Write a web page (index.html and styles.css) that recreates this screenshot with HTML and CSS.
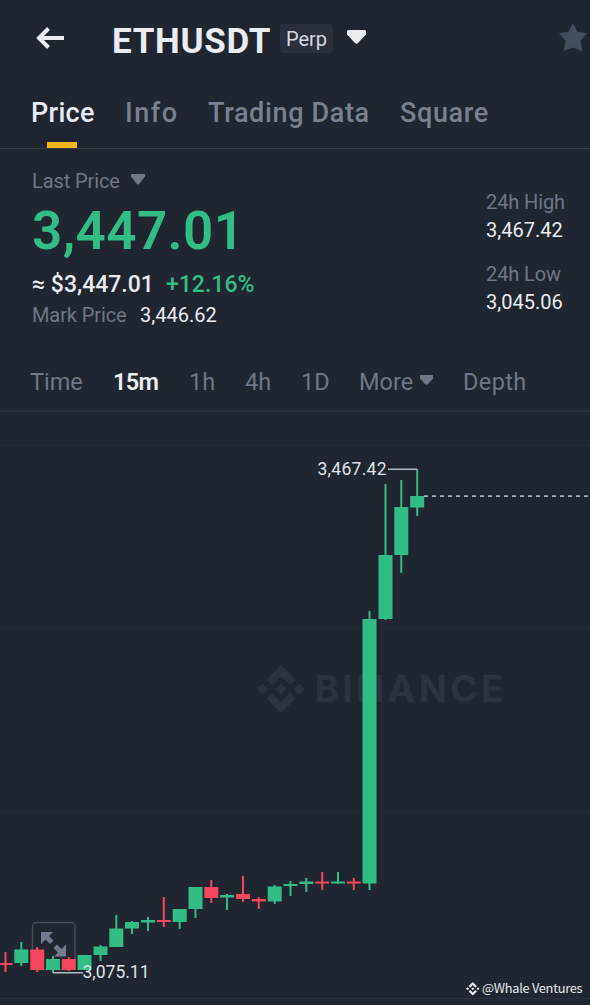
FILE: index.html
```html
<!DOCTYPE html>
<html lang="en">
<head>
  <meta charset="UTF-8">
  <meta name="viewport" content="width=device-width, initial-scale=1.0">
  <title>ETHUSDT Perp</title>
  <link rel="stylesheet" href="styles.css">
</head>
<body>

  <!-- Header -->
  <header class="header">
    <svg class="back" viewBox="0 0 28 22">
      <path d="M28 11H3M12.500 1.500L3 11l9.500 9.500"></path>
    </svg>
    <h1>ETHUSDT</h1>
    <span class="badge">Perp</span>
    <svg class="caret-big" viewBox="0 0 19 14">
      <path d="M1 0h17l1 1v3.500L11 13q-1.500 1.500-3 0L0 4.500V1z"></path>
    </svg>
    <svg class="star" viewBox="0 0 30 30">
      <path d="M15 1l4.300 8.800 9.700 1.400-6.300 7.200 1.500 10.600L15 25.500l-9.200 3.500 1.500-10.600L1 11.200l9.700-1.400z"></path>
    </svg>
  </header>

  <!-- Tabs -->
  <nav class="tabs">
    <a class="tab active">Price</a>
    <a class="tab info">Info</a>
    <a class="tab">Trading Data</a>
    <a class="tab">Square</a>
  </nav>

  <!-- Price summary -->
  <section class="stats">
    <div class="summary">
      <div class="label last">Last Price
        <svg class="caret" viewBox="0 0 14 11"><path d="M0 0h14v2.500L8 10q-1 1-2 0L0 2.500z"></path></svg>
      </div>
      <div class="price">3,447.01</div>
      <div class="fiat"><span class="usd">≈ $3,447.01</span><span class="change">+12.16%</span></div>
      <div class="mark"><span class="label">Mark Price</span><span class="value">3,446.62</span></div>
    </div>
    <div class="range">
      <div class="label">24h High</div>
      <div class="value">3,467.42</div>
      <div class="label low">24h Low</div>
      <div class="value">3,045.06</div>
    </div>
  </section>

  <!-- Intervals -->
  <nav class="intervals">
    <a>Time</a>
    <a class="active">15m</a>
    <a>1h</a>
    <a>4h</a>
    <a>1D</a>
    <a class="more">More
      <svg class="caret-small" viewBox="0 0 13 10"><path d="M0 0h13v3.500L8 9q-1.500 1.500-3 0L0 3.500z"></path></svg>
    </a>
    <a class="depth">Depth</a>
  </nav>

  <!-- Candlestick chart -->
  <main class="chart">
    <svg viewBox="0 412 590 593">
      <defs>
        <symbol id="logo" viewBox="0 0 48 48">
          <path d="M24 0L38.500 14.500l-5.500 5.500-9-9-9 9-5.500-5.500zM24 48L9.500 33.500l5.500-5.500 9 9 9-9 5.500 5.500zM24 18.500l5.500 5.500-5.500 5.500-5.500-5.500zM5.500 18.500L11 24l-5.500 5.500L0 24zM42.500 18.500L48 24l-5.500 5.500L37 24z"></path>
        </symbol>
      </defs>

      <path class="grid" d="M0 445.500H590M0 628.500H590M0 812.500H590"></path>
      <path class="axis" d="M0 998.500H590"></path>

      <use class="watermark" href="#logo" x="257" y="665" width="48" height="48"></use>
      <text class="watermark name" x="314.500" y="702" textLength="189">BINANCE</text>

      <rect class="expand" x="32.500" y="922.500" width="42.500" height="47" rx="4"></rect>

      <path class="wick up" d="M21.300 942V966M53 956V973M84.500 955V970M100.500 945V961M116.300 915V947M132 921V934M148 917V931M179.700 909V929M195.500 887V918M227 894V910M274.700 885V904M290.500 881V896M306.300 878V892M338 872V884M369.500 611V890M385.500 484V620M401.300 480V573M417.200 469V516"></path>
      <path class="wick down" d="M5.500 952V972M37.200 947V972M68.800 957V971M163.800 897V927M211.300 880V903M243 876V902M258.800 897V909M322.200 872V890M353.800 878V890"></path>
      <path class="body up" d="M21.300 949.500V963M53 959V970M84.500 955V970M100.500 946.500V955M116.300 928.500V947M132 922V928.500M148 920V922.500M179.700 909V922M195.500 887V909M227 895V897.500M274.700 886.500V901.500M290.500 884V886M306.300 881.500V884M338 881.500V883.500M369.500 619V883.500M385.500 555V619M401.300 507V555M417.200 496V507.500"></path>
      <path class="body down" d="M5.500 963V965M37.200 949.500V970M68.800 959V970M163.800 920V922M211.300 887V898M243 894V899M258.800 899V901.500M322.200 881.500V883.500M353.800 881.500V883.500"></path>

      <g class="arrows">
        <path d="M41 932h12l-4 4 4.500 4.500-3.500 3.500-4.500-4.500-4.500 4.500z"></path>
        <path d="M66 956.500H54l4-4-4.500-4.500 3.500-3.500 4.500 4.500 4.500-4.500z"></path>
      </g>

      <path class="lead" d="M388 469.200H417M53 972.700H83"></path>
      <path class="last-line" d="M424 496.200H590"></path>
      <text class="note" x="317.500" y="475" textLength="69">3,467.42</text>
      <text class="note" x="82.500" y="978" textLength="67">3,075.11</text>

      <use class="credit" href="#logo" x="466" y="982" width="13.500" height="13.500"></use>
      <text class="credit" x="482" y="993" textLength="100.500">@Whale Ventures</text>
    </svg>
  </main>

</body>
</html>
```

FILE: styles.css
```css
* {
  box-sizing: border-box;
}

body {
  margin: 0;
  width: 590px;
  height: 1005px;
  overflow: hidden;
  background: #1f262f;
  color: #eaecf2;
  font-family: Roboto, "Liberation Sans", sans-serif;
}

svg {
  display: block;
  fill: currentColor;
}

/* Header */
.header {
  display: flex;
  align-items: center;
  height: 78px;
  padding: 0 2px 2px 36px;
}

.back {
  width: 28px;
  height: 22px;
  fill: none;
  stroke: currentColor;
  stroke-width: 4;
}

h1 {
  width: 168px;
  margin: 6px 0 0 48px;
  font-size: 35px;
  font-weight: 700;
  letter-spacing: 0.7px;
}

.badge {
  width: 53px;
  height: 29px;
  border-radius: 4px;
  background: #29303c;
  color: #d5d9e1;
  font-size: 20px;
  line-height: 31px;
  text-align: center;
}

.caret-big {
  width: 19px;
  height: 14px;
  margin: 0 0 2px 14px;
}

.star {
  width: 30px;
  height: 30px;
  margin: 0 0 2px auto;
  color: #454e5d;
}

/* Tabs */
.tabs {
  display: grid;
  grid-template-columns: 94px 83px 192px auto;
  height: 71px;
  padding-left: 31px;
  border-bottom: 1px solid #333a45;
  color: #7a8090;
  font-size: 27px;
  font-weight: 500;
  line-height: 70px;
  letter-spacing: 0.65px;
  white-space: nowrap;
}

.tab.active {
  color: #eaecf2;
  background: linear-gradient(#edb91c, #edb91c) 16px 64px / 30px 6px no-repeat;
  letter-spacing: 0.3px;
}

.tab.info {
  letter-spacing: 1.5px;
}

/* Price summary */
.stats {
  display: flex;
  justify-content: space-between;
  height: 203px;
  padding: 20px 24px 0 32px;
}

.label {
  color: #707686;
  font-size: 20px;
  letter-spacing: -0.1px;
}

.last {
  display: flex;
  gap: 11px;
  line-height: 24px;
}

.caret {
  width: 14px;
  height: 11px;
  margin-top: 5px;
}

.price {
  color: #32bd86;
  font-size: 53px;
  font-weight: 600;
  line-height: 77px;
  letter-spacing: 0.4px;
}

.fiat {
  display: flex;
  font-size: 23px;
  font-weight: 500;
  line-height: 30px;
  margin-bottom: -1px;
}

.usd {
  width: 134px;
}

.change {
  color: #32bd86;
}

.mark {
  display: flex;
  line-height: 32px;
}

.mark .label {
  width: 108px;
}

.value {
  font-size: 20px;
}

.range {
  width: 80px;
  padding-top: 19px;
  line-height: 28px;
  white-space: nowrap;
}

.low {
  margin-top: 16px;
}

/* Intervals */
.intervals {
  display: grid;
  grid-template-columns: 83px 76px 56px 56px 58px 104px auto;
  height: 60px;
  padding-left: 30px;
  border-bottom: 2px solid #29303a;
  color: #707686;
  font-size: 23.5px;
  line-height: 61px;
}

.intervals .active {
  color: #eaecf2;
  font-weight: 600;
  letter-spacing: -0.7px;
}

.depth {
  letter-spacing: 0.4px;
}

.more {
  display: flex;
  gap: 7px;
}

.caret-small {
  width: 13px;
  height: 10px;
  margin-top: 23px;
}

/* Chart */
.chart svg {
  width: 590px;
  height: 593px;
}

.grid {
  stroke: #232a35;
}

.axis {
  stroke: #2b323d;
}

.watermark {
  fill: #2c323e;
}

.name {
  font: 700 37px Inter, sans-serif;
}

.expand {
  fill: none;
  stroke: #454a58;
  stroke-width: 1.5;
}

.arrows {
  fill: #747b8e;
}

.wick {
  stroke-width: 2;
}

.body {
  stroke-width: 14;
}

.up {
  stroke: #32bd86;
}

.down {
  stroke: #f6465d;
}

.lead {
  stroke: #b5b9c2;
  stroke-width: 1.5;
}

.last-line {
  stroke: #e3e6ec;
  stroke-width: 1.3;
  stroke-dasharray: 4 4;
}

.note {
  fill: #dfe2e8;
  font-size: 17.5px;
}

.credit {
  fill: #e8eaee;
  font: 12.8px "Noto Sans CJK SC", "Noto Sans", sans-serif;
}
```
